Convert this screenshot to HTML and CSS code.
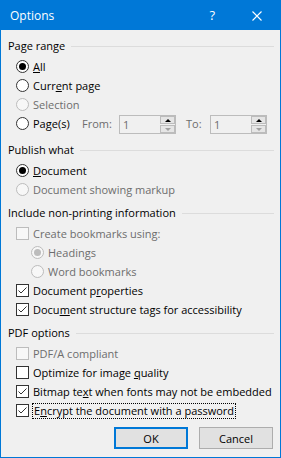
FILE: index.html
```html
<!DOCTYPE html>
<html>
<head>
<meta charset="utf-8">
<link rel="stylesheet" href="styles.css">
</head>
<body>
<div class="window">
  <div class="titlebar">
    <span class="title">Options</span>
    <span class="help">?</span>
    <svg class="close" width="10" height="10" viewBox="0 0 10 10"><path d="M0.5 0.5 L9.5 9.5 M9.5 0.5 L0.5 9.5" stroke="#fff" stroke-width="1.1" fill="none"/></svg>
  </div>
  <div class="content">
    <div class="section">
      <div class="header"><span>Page range</span><i class="rule"></i></div>
      <div class="item"><span class="radio on"></span><span><u>A</u>ll</span></div>
      <div class="item"><span class="radio"></span><span>Curr<u>e</u>nt page</span></div>
      <div class="item disabled"><span class="radio"></span><span>Selection</span></div>
      <div class="item"><span class="radio"></span><span class="plabel">Pa<u>g</u>e(s)</span>
        <span class="spinlabel from">From:</span>
        <span class="spin"><span class="val">1</span><span class="btns"><span class="up"></span><span class="down"></span></span></span>
        <span class="spinlabel to">To:</span>
        <span class="spin"><span class="val">1</span><span class="btns"><span class="up"></span><span class="down"></span></span></span>
      </div>
    </div>
    <div class="section s2">
      <div class="header"><span>Publish what</span><i class="rule"></i></div>
      <div class="item"><span class="radio on"></span><span><u>D</u>ocument</span></div>
      <div class="item disabled"><span class="radio"></span><span>Document showing markup</span></div>
    </div>
    <div class="section s3">
      <div class="header"><span>Include non-printing information</span><i class="rule"></i></div>
      <div class="item disabled"><span class="check"></span><span>Create bookmarks using:</span></div>
      <div class="item disabled sub"><span class="radio on"></span><span>Headings</span></div>
      <div class="item disabled sub"><span class="radio"></span><span>Word bookmarks</span></div>
      <div class="item"><span class="check"><svg viewBox="0 0 11 11" width="11" height="11"><path d="M1.5 5.5 L4 8 L9.5 2.5" stroke="#333" stroke-width="1" fill="none"/></svg></span><span>Document p<u>r</u>operties</span></div>
      <div class="item"><span class="check"><svg viewBox="0 0 11 11" width="11" height="11"><path d="M1.5 5.5 L4 8 L9.5 2.5" stroke="#333" stroke-width="1" fill="none"/></svg></span><span>Docu<u>m</u>ent structure tags for accessibility</span></div>
    </div>
    <div class="section s3">
      <div class="header"><span>PDF options</span><i class="rule"></i></div>
      <div class="item disabled"><span class="check"></span><span>PDF/A compliant</span></div>
      <div class="item"><span class="check"></span><span>Optimize for image <u>q</u>uality</span></div>
      <div class="item"><span class="check"><svg viewBox="0 0 11 11" width="11" height="11"><path d="M1.5 5.5 L4 8 L9.5 2.5" stroke="#333" stroke-width="1" fill="none"/></svg></span><span>Bitmap te<u>x</u>t when fonts may not be embedded</span></div>
      <div class="item"><span class="check"><svg viewBox="0 0 11 11" width="11" height="11"><path d="M1.5 5.5 L4 8 L9.5 2.5" stroke="#333" stroke-width="1" fill="none"/></svg></span><span class="focus">E<u>n</u>crypt the document with a password</span></div>
    </div>
    <div class="buttons">
      <button class="btn default">OK</button>
      <button class="btn">Cancel</button>
    </div>
  </div>
</div>
</body>
</html>
```

FILE: styles.css
```css
html, body {
  margin: 0;
  padding: 0;
  background: #f0f0f0;
}
body {
  font-family: "Open Sans", "Noto Sans", sans-serif;
  font-size: 11px;
  color: #000;
}
.window {
  width: 281px;
  height: 458px;
  box-sizing: border-box;
  border: 1px solid #0078d7;
  background: #f0f0f0;
  display: flex;
  flex-direction: column;
}
.titlebar {
  height: 29px;
  background: #0078d7;
  color: #fff;
  display: flex;
  align-items: center;
}
.title {
  margin-left: 9px;
  font-size: 12px;
  margin-top: -1px;
}
.help {
  margin-left: auto;
  font-size: 13px;
  margin-right: 37px;
  margin-top: -1px;
}
.close {
  margin-right: 18px;
}
.content {
  padding: 6px 6px 0 7px;
  display: flex;
  flex-direction: column;
}
.header {
  height: 19px;
  display: flex;
  align-items: center;
  margin-bottom: 2px;
}
.rule {
  flex: 1;
  height: 1px;
  background: #dcdcdc;
  margin-left: 6px;
  margin-top: 1px;
}
.s2 { margin-top: 7px; }
.s3 { margin-top: 4px; }
.item {
  height: 19px;
  display: flex;
  align-items: center;
  padding-left: 8px;
}
.item.sub { padding-left: 23px; }
.item.disabled { color: #6d6d6d; }
.radio, .check {
  width: 13px;
  height: 13px;
  box-sizing: border-box;
  border: 1px solid #333;
  background: #fff;
  margin-right: 4px;
  flex: none;
  position: relative;
}
.check svg { display: block; }
.radio { border-radius: 50%; }
.radio.on::after {
  content: "";
  position: absolute;
  left: 2px;
  top: 2px;
  width: 7px;
  height: 7px;
  border-radius: 50%;
  background: #000;
}
.disabled .radio, .disabled .check {
  border-color: #bcbcbc;
  background: #f7f7f7;
}
.disabled .radio.on::after { background: #bcbcbc; }
.plabel { width: 41px; }
.spinlabel { color: #6d6d6d; }
.from { margin-left: 8px; width: 37px; }
.to { margin-left: 10px; width: 24px; }
.spin {
  width: 57px;
  height: 19px;
  box-sizing: border-box;
  border: 1px solid #bcbcbc;
  background: #f0f0f0;
  display: flex;
  align-items: center;
  margin-top: 1px;
}
.val {
  flex: 1;
  color: #6d6d6d;
  padding-left: 3px;
  padding-top: 1px;
}
.btns {
  width: 15px;
  height: 17px;
  display: flex;
  flex-direction: column;
  gap: 1px;
}
.up, .down {
  flex: 1;
  box-sizing: border-box;
  border: 1px solid #bcbcbc;
  background: #e5e5e5;
  position: relative;
}
.up::after, .down::after {
  content: "";
  position: absolute;
  left: 4px;
  width: 0;
  height: 0;
  border-left: 3px solid transparent;
  border-right: 3px solid transparent;
}
.up::after { top: 2px; border-bottom: 3px solid #000; }
.down::after { top: 2px; border-top: 3px solid #a0a0a0; }
.focus {
  outline: 1px dotted #000;
  outline-offset: 0;
  padding: 0 1px;
  line-height: 14px;
}
u { text-underline-offset: 1px; }
.buttons {
  display: flex;
  justify-content: flex-end;
  gap: 11px;
  margin-top: 7px;
  padding-right: 1px;
}
.btn {
  width: 74px;
  height: 22px;
  box-sizing: border-box;
  border: 1px solid #adadad;
  background: #e1e1e1;
  font-family: inherit;
  font-size: 11px;
  color: #000;
  padding: 0;
}
.btn.default { border: 2px solid #0078d7; }
```
